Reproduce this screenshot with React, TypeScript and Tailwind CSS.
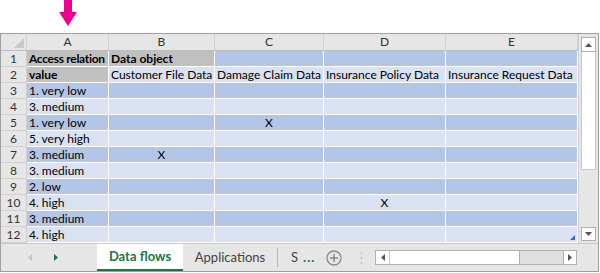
import { Fragment } from 'react';

const cols = [
  { key: 'A', w: 'w-[82px]' },
  { key: 'B', w: 'w-[106px]' },
  { key: 'C', w: 'w-[109px]' },
  { key: 'D', w: 'w-[122px]' },
  { key: 'E', w: 'w-[132px]' },
];

const values = [
  '1. very low',
  '3. medium',
  '1. very low',
  '5. very high',
  '3. medium',
  '3. medium',
  '2. low',
  '4. high',
  '3. medium',
  '4. high',
];

// row index (1-based) -> column with an X
const marks: Record<number, string> = { 5: 'C', 7: 'B', 10: 'D' };

const headerRow2 = ['Customer File Data', 'Damage Claim Data', 'Insurance Policy Data', 'Insurance Request Data'];

function cellBg(row: number, col: string) {
  if ((row === 1 || row === 2) && col === 'A') return 'bg-[#c0c0c0]';
  if (row === 1 && col === 'B') return 'bg-[#c0c0c0]';
  return row % 2 === 1 ? 'bg-[#b4c6e7]' : 'bg-[#d9e1f2]';
}

function cellContent(row: number, col: string, ci: number) {
  if (row === 1 && col === 'A') return <span className="font-bold tracking-[-0.3px]">Access relation</span>;
  if (row === 1 && col === 'B') return <span className="font-bold">Data object</span>;
  if (row === 2 && col === 'A') return <span className="font-bold">value</span>;
  if (row === 2) return headerRow2[ci - 1];
  if (col === 'A') return values[row - 3];
  if (marks[row] === col) return <span className="block w-full text-center">X</span>;
  return null;
}

export default function App() {
  const rows = Array.from({ length: 12 }, (_, i) => i + 1);

  return (
    <div className="w-[600px] h-[273px] bg-white overflow-hidden font-['Lato','Liberation_Sans',sans-serif] text-[12px] text-black">
      <div className="h-[33px] pl-[59px]">
        <svg width="18" height="26" viewBox="0 0 18 26">
          <rect x="5" y="0" width="8" height="13" fill="#ec008c" />
          <polygon points="0,12 18,12 9,26" fill="#ec008c" />
        </svg>
      </div>

      <div className="w-[599px] h-[239px] border border-[#a0a0a0] flex flex-col">
        <div className="flex h-[209px]">
          <div className="flex flex-col">
            {/* column header */}
            <div className="flex h-[17px] bg-[#e6e6e6] border-b border-[#bdbdbd]">
              <div className="w-[26px] border-r border-[#d0d0d0] flex items-end justify-end pr-[2px] pb-[2px]">
                <svg width="10" height="10" viewBox="0 0 10 10">
                  <polygon points="10,0 10,10 0,10" fill="#c8c8c8" />
                </svg>
              </div>
              {cols.map(c => (
                <div key={c.key} className={`${c.w} border-r border-[#d0d0d0] flex items-center justify-center text-[#333] leading-none`}>
                  {c.key}
                </div>
              ))}
            </div>
            {rows.map(r => (
              <div key={r} className="flex h-[16px]">
                <div className="w-[26px] bg-[#e6e6e6] border-r border-b border-[#d0d0d0] flex items-center justify-center text-[#333] leading-none">
                  {r}
                </div>
                {cols.map((c, ci) => (
                  <Fragment key={c.key}>
                    <div
                      className={`${c.w} ${cellBg(r, c.key)} border-r border-b border-white flex items-center px-[2px] leading-none whitespace-nowrap overflow-hidden relative`}
                    >
                      {cellContent(r, c.key, ci)}
                      {r === 12 && c.key === 'E' && (
                        <svg className="absolute right-[2px] bottom-[2px]" width="5" height="5" viewBox="0 0 5 5">
                          <polygon points="5,0 5,5 0,5" fill="#3d64c8" />
                        </svg>
                      )}
                    </div>
                  </Fragment>
                ))}
              </div>
            ))}
          </div>

          {/* vertical scrollbar */}
          <div className="flex-1 bg-[#e6e6e6] border-l border-[#d0d0d0] flex flex-col items-center pt-[3px] pb-[2px]">
            <div className="w-[15px] h-[15px] bg-white border border-[#b0b0b0] flex items-center justify-center">
              <svg width="7" height="4" viewBox="0 0 7 4"><polygon points="0,4 7,4 3.5,0" fill="#555" /></svg>
            </div>
            <div className="w-[15px] h-[118px] bg-white border-x border-b border-[#c8c8c8]" />
            <div className="flex-1" />
            <div className="w-[15px] h-[14px] bg-white border border-[#b0b0b0] flex items-center justify-center">
              <svg width="7" height="4" viewBox="0 0 7 4"><polygon points="0,0 7,0 3.5,4" fill="#555" /></svg>
            </div>
          </div>
        </div>

        {/* sheet tabs bar */}
        <div className="flex-1 bg-[#e6e6e6] border-t border-[#c8c8c8] flex items-stretch text-[13px]">
          <div className="w-[96px] flex items-center">
            <svg className="ml-[27px]" width="4" height="7" viewBox="0 0 4 7"><polygon points="4,0 4,7 0,3.5" fill="#c4c4c4" /></svg>
            <svg className="ml-[22px]" width="4" height="7" viewBox="0 0 4 7"><polygon points="0,0 0,7 4,3.5" fill="#217346" /></svg>
          </div>
          <div className="w-[86px] bg-white border-b-2 border-[#217346] flex items-center justify-center font-bold text-[#217346]">
            Data flows
          </div>
          <div className="w-[94px] flex items-center justify-center text-[#444]">Applications</div>
          <div className="w-px my-[4px] bg-[#b8b8b8]" />
          <div className="flex items-center pl-[13px] text-[#444]">
            S
            <span className="ml-[5px] text-[#217346] font-bold tracking-[1px]">...</span>
          </div>
          <div className="flex items-center ml-[11px]">
            <svg width="16" height="16" viewBox="0 0 16 16">
              <circle cx="8" cy="8" r="7" fill="none" stroke="#8a8a8a" strokeWidth="1.3" />
              <line x1="8" y1="4" x2="8" y2="12" stroke="#8a8a8a" strokeWidth="1.5" />
              <line x1="4" y1="8" x2="12" y2="8" stroke="#8a8a8a" strokeWidth="1.5" />
            </svg>
          </div>
          <div className="flex items-center ml-[18px]">
            <svg width="3" height="14" viewBox="0 0 3 14">
              <circle cx="1.5" cy="2" r="1" fill="#c0c0c0" />
              <circle cx="1.5" cy="7" r="1" fill="#c0c0c0" />
              <circle cx="1.5" cy="12" r="1" fill="#c0c0c0" />
            </svg>
          </div>
          <div className="flex items-center ml-[12px]">
            <div className="flex h-[15px] w-[202px] border border-[#b0b0b0] bg-[#e0e0e0]">
              <div className="w-[14px] bg-white border-r border-[#c8c8c8] flex items-center justify-center">
                <svg width="4" height="7" viewBox="0 0 4 7"><polygon points="4,0 4,7 0,3.5" fill="#555" /></svg>
              </div>
              <div className="w-[130px] bg-white border-r border-[#b0b0b0]" />
              <div className="flex-1" />
              <div className="w-[13px] bg-white border-l border-[#b0b0b0] flex items-center justify-center">
                <svg width="4" height="7" viewBox="0 0 4 7"><polygon points="0,0 0,7 4,3.5" fill="#555" /></svg>
              </div>
            </div>
          </div>
        </div>
      </div>
    </div>
  );
}
